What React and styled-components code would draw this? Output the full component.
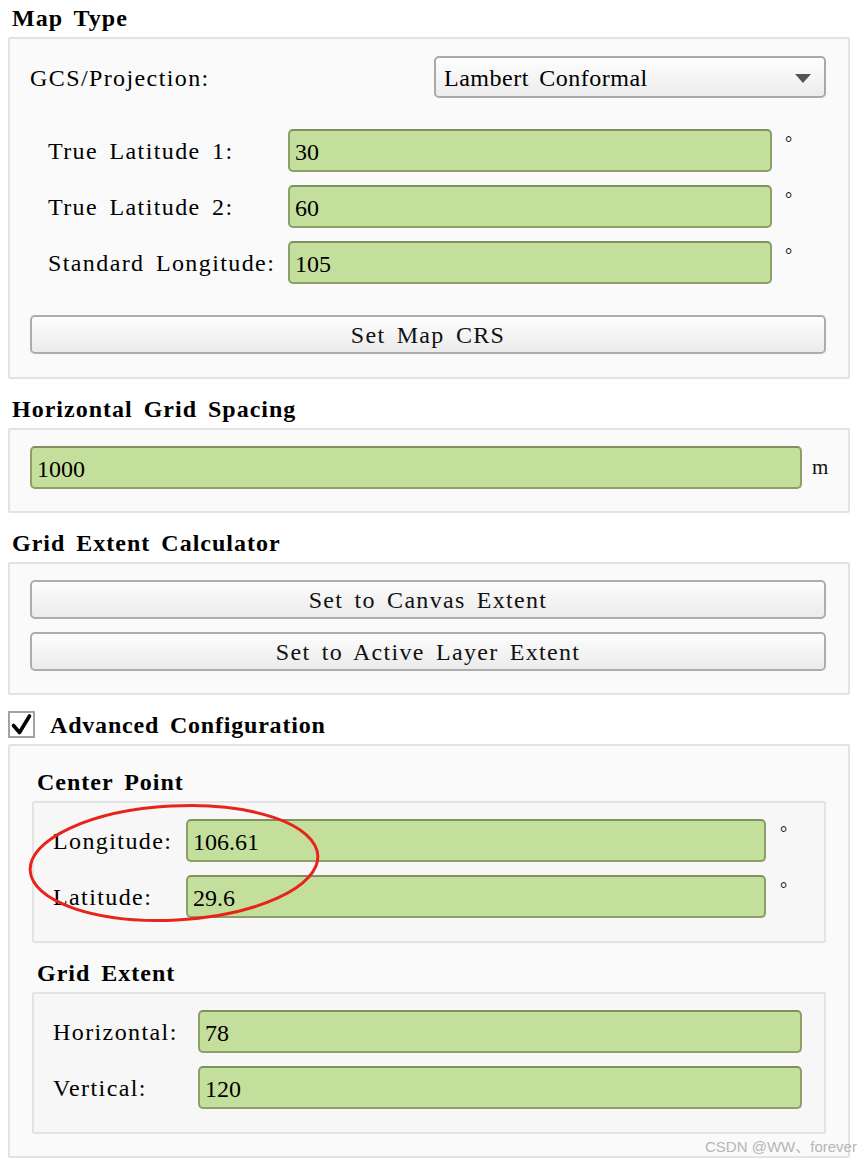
import React from "react";
import styled, { createGlobalStyle } from "styled-components";

const GlobalStyle = createGlobalStyle`
  html, body {
    margin: 0;
    padding: 0;
    background: #ffffff;
  }
  body {
    width: 866px;
    height: 1162px;
    overflow: hidden;
    font-family: "Liberation Serif", "Times New Roman", serif;
    color: #000;
  }
`;

const Page = styled.div`
  position: relative;
  width: 866px;
  box-sizing: border-box;
  padding: 0 16px 0 8px;
  display: flex;
  flex-direction: column;
  gap: 12px;
`;

const Section = styled.section`
  display: flex;
  flex-direction: column;
`;

const SectionTitle = styled.div`
  height: 37px;
  line-height: 37px;
  padding-left: ${(p) => p.$indent ?? 4}px;
  margin-top: ${(p) => p.$gapAbove ?? 0}px;
  font-size: 24px;
  font-weight: bold;
  letter-spacing: 1px;
  word-spacing: 4px;
  white-space: nowrap;
`;

const GroupBox = styled.div`
  position: relative;
  display: flex;
  flex-direction: column;
  gap: ${(p) => p.$gap ?? 13}px;
  border: 2px solid #e3e3e3;
  border-radius: 2px;
  background: ${(p) => (p.$inner ? "#f7f7f7" : "#fafafa")};
  padding: ${(p) => p.$padTop ?? 16}px ${(p) => p.$padRight ?? 22}px
    ${(p) => p.$padBottom ?? 22}px ${(p) => p.$padLeft ?? 20}px;
`;

const Label = styled.span`
  padding-top: 2px;
  font-size: 24px;
  letter-spacing: 1.4px;
  word-spacing: 4px;
  white-space: nowrap;
`;

const TopRow = styled.div`
  display: flex;
  align-items: center;
  justify-content: space-between;
  height: 42px;
`;

const Combo = styled.div`
  width: 392px;
  height: 42px;
  box-sizing: border-box;
  display: flex;
  align-items: center;
  justify-content: space-between;
  padding: 2px 13px 0 8px;
  border: 2px solid #a9a9a9;
  border-radius: 5px;
  background: linear-gradient(#fefefe, #ececec);
  font-size: 24px;
  letter-spacing: 0.5px;
  word-spacing: 4px;
`;

const FieldStack = styled.div`
  display: flex;
  flex-direction: column;
  gap: 13px;
  margin: ${(p) => p.$margin ?? "0"};
  padding-left: ${(p) => p.$indent ?? 0}px;
`;

const FieldRow = styled.div`
  display: grid;
  grid-template-columns: ${(p) => p.$columns};
  align-items: center;
  height: 43px;
`;

const ValueInput = styled.input`
  height: 43px;
  width: 100%;
  box-sizing: border-box;
  margin: 0;
  padding: 3px 0 0 5px;
  border: 2px solid #8c9f69;
  border-top-color: #7f9160;
  border-radius: 5px;
  background: #c4df9b;
  font-family: inherit;
  font-size: 24px;
  color: #000;
  outline: none;
`;

const Unit = styled.span`
  align-self: ${(p) => (p.$top ? "start" : "center")};
  padding-left: ${(p) => p.$pad ?? 13}px;
  padding-top: ${(p) => (p.$top ? 4 : 0)}px;
  font-size: ${(p) => p.$size ?? 18}px;
  line-height: ${(p) => (p.$top ? "20px" : "normal")};
  color: #111;
`;

const PushButton = styled.button`
  height: 39px;
  width: 100%;
  box-sizing: border-box;
  margin: ${(p) => p.$margin ?? "0"};
  padding: 2px 0 0;
  border: 2px solid #adadad;
  border-radius: 5px;
  background: linear-gradient(#fdfdfd, #ebebeb);
  font-family: inherit;
  font-size: 24px;
  letter-spacing: 1.3px;
  word-spacing: 4px;
  color: #111;
`;

const CheckRow = styled.label`
  display: flex;
  align-items: center;
  gap: 15px;
  height: 37px;
`;

const CheckBox = styled.span`
  width: 27px;
  height: 27px;
  box-sizing: border-box;
  display: flex;
  align-items: center;
  justify-content: center;
  margin-top: -3px;
  border: 2px solid #a3a3a3;
  background: #ffffff;
`;

const CheckText = styled.span`
  font-size: 24px;
  font-weight: bold;
  letter-spacing: 0.8px;
  word-spacing: 4px;
  white-space: nowrap;
`;

const Annotation = styled.svg`
  position: absolute;
  left: -8px;
  top: -1px;
  pointer-events: none;
  z-index: 2;
`;

const Watermark = styled.div`
  position: absolute;
  left: 705px;
  top: 1137px;
  font-family: "Liberation Sans", "Noto Sans CJK SC", sans-serif;
  font-size: 15px;
  line-height: 20px;
  color: #b5b5b5;
  white-space: nowrap;
`;

const DropArrow = () => (
  <svg width="16" height="9" viewBox="0 0 16 9">
    <path d="M0 0 L16 0 L8 9 Z" fill="#555" />
  </svg>
);

const CheckMark = () => (
  <svg width="23" height="23" viewBox="0 0 23 23">
    <path
      d="M3.5 12.5 L9.5 19.5 L19.5 3"
      fill="none"
      stroke="#000"
      strokeWidth="3.6"
      strokeLinecap="round"
      strokeLinejoin="round"
    />
  </svg>
);

const latitudeFields = [
  { label: "True Latitude 1:", value: "30" },
  { label: "True Latitude 2:", value: "60" },
  { label: "Standard Longitude:", value: "105" },
];

const centerFields = [
  { label: "Longitude:", value: "106.61" },
  { label: "Latitude:", value: "29.6" },
];

const extentFields = [
  { label: "Horizontal:", value: "78" },
  { label: "Vertical:", value: "120" },
];

export default function App() {
  return (
    <>
      <GlobalStyle />
      <Page>
        <Section>
          <SectionTitle>Map Type</SectionTitle>
          <GroupBox $padTop={17} $padBottom={23} $gap={0}>
            <TopRow>
              <Label>GCS/Projection:</Label>
              <Combo>
                <span>Lambert Conformal</span>
                <DropArrow />
              </Combo>
            </TopRow>
            <FieldStack $margin="31px 0 0" $indent={18}>
              {latitudeFields.map((f) => (
                <FieldRow key={f.label} $columns="240px 1fr 54px">
                  <Label>{f.label}</Label>
                  <ValueInput readOnly value={f.value} />
                  <Unit $top>°</Unit>
                </FieldRow>
              ))}
            </FieldStack>
            <PushButton $margin="31px 0 0">Set Map CRS</PushButton>
          </GroupBox>
        </Section>

        <Section>
          <SectionTitle>Horizontal Grid Spacing</SectionTitle>
          <GroupBox>
            <FieldRow $columns="1fr 24px">
              <ValueInput readOnly value="1000" />
              <Unit $pad={10} $size={21}>
                m
              </Unit>
            </FieldRow>
          </GroupBox>
        </Section>

        <Section>
          <SectionTitle>Grid Extent Calculator</SectionTitle>
          <GroupBox>
            <PushButton>Set to Canvas Extent</PushButton>
            <PushButton>Set to Active Layer Extent</PushButton>
          </GroupBox>
        </Section>

        <Section>
          <CheckRow>
            <CheckBox>
              <CheckMark />
            </CheckBox>
            <CheckText>Advanced Configuration</CheckText>
          </CheckRow>
          <GroupBox $padTop={18} $padLeft={22} $padBottom={22} $gap={0}>
            <SectionTitle $indent={5}>Center Point</SectionTitle>
            <GroupBox $inner $padLeft={19} $padBottom={23}>
              {centerFields.map((f) => (
                <FieldRow key={f.label} $columns="133px 1fr 36px">
                  <Label>{f.label}</Label>
                  <ValueInput readOnly value={f.value} />
                  <Unit $top $pad={14}>
                    °
                  </Unit>
                </FieldRow>
              ))}
              <Annotation width="300" height="124" viewBox="0 0 300 124">
                <ellipse
                  cx="148"
                  cy="61"
                  rx="144"
                  ry="57"
                  fill="none"
                  stroke="#e8231c"
                  strokeWidth="3"
                  transform="rotate(-3 148 61)"
                />
              </Annotation>
            </GroupBox>
            <SectionTitle $indent={5} $gapAbove={12}>
              Grid Extent
            </SectionTitle>
            <GroupBox $inner $padLeft={19} $padBottom={23}>
              {extentFields.map((f) => (
                <FieldRow key={f.label} $columns="145px 1fr">
                  <Label>{f.label}</Label>
                  <ValueInput readOnly value={f.value} />
                </FieldRow>
              ))}
            </GroupBox>
          </GroupBox>
        </Section>
        <Watermark>CSDN @WW、forever</Watermark>
      </Page>
    </>
  );
}
